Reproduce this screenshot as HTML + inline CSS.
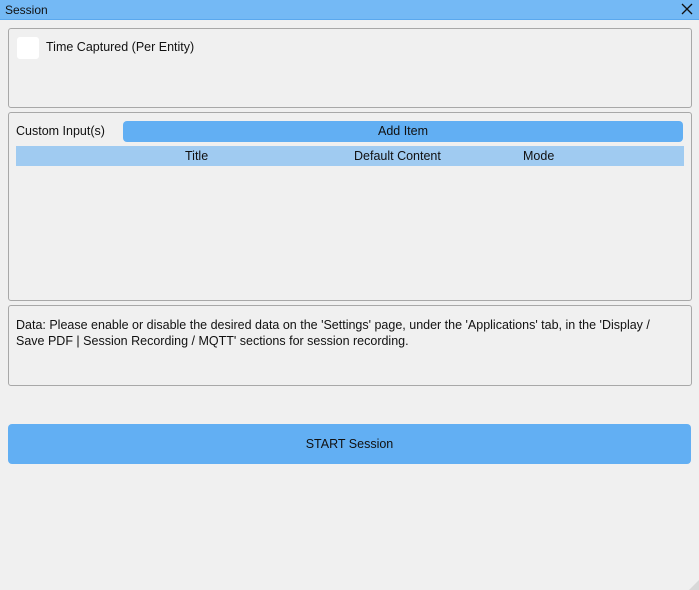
<!DOCTYPE html>
<html><head><style>
body{margin:0;width:699px;height:590px;background:#f0f0f0;font-family:"Liberation Sans",sans-serif;font-size:12.5px;color:#111;position:relative;overflow:hidden}
.title{position:absolute;left:0;top:0;width:699px;height:19px;background:#74b9f5;border-bottom:1px solid #5aa8ee}
.title span{position:absolute;left:5px;top:3px;font-size:12px}
.box{position:absolute;left:8px;width:684px;border:1px solid #a8a8a8;border-radius:3px;box-sizing:border-box}
.btn{position:absolute;background:#62aff3;border-radius:4px;text-align:center}
</style></head><body>
<div class="title"><span>Session</span>
<svg style="position:absolute;left:681px;top:3px" width="12" height="12" viewBox="0 0 12 12"><path d="M1 1L11 11M11 1L1 11" stroke="#111" stroke-width="1.3"/></svg></div>
<div class="box" style="top:28px;height:80px">
<div style="position:absolute;left:8px;top:8px;width:22px;height:22px;background:#fff;border-radius:3px"></div>
<div style="position:absolute;left:37px;top:11px">Time Captured (Per Entity)</div></div>
<div class="box" style="top:112px;height:189px">
<div style="position:absolute;left:7px;top:11px">Custom Input(s)</div>
<div class="btn" style="left:114px;top:8px;width:560px;height:21px;line-height:21px">Add Item</div>
<div style="position:absolute;left:7px;top:33px;width:668px;height:20px;background:#a0cbf1;line-height:20px">
<span style="position:absolute;left:169px">Title</span><span style="position:absolute;left:338px">Default Content</span><span style="position:absolute;left:507px">Mode</span></div></div>
<div class="box" style="top:305px;height:81px">
<div style="position:absolute;left:7px;top:11px;width:665px;line-height:16px">Data: Please enable or disable the desired data on the 'Settings' page, under the 'Applications' tab, in the 'Display / Save PDF | Session Recording / MQTT' sections for session recording.</div></div>
<div class="btn" style="left:8px;top:424px;width:683px;height:40px;line-height:40px">START Session</div>
<div style="position:absolute;right:0;bottom:0;width:0;height:0;border-left:10px solid transparent;border-bottom:10px solid #d8d8d8"></div>
</body></html>
